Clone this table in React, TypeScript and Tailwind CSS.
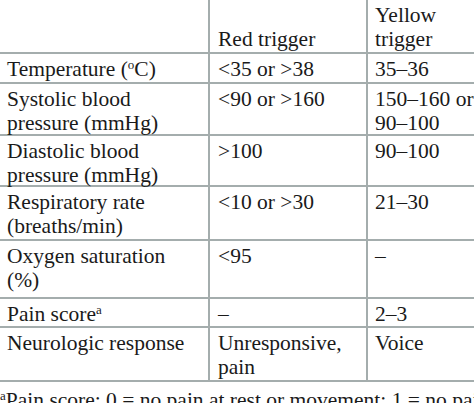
import React from "react";

type Row = { h: string; a: React.ReactNode; b: React.ReactNode; c: React.ReactNode };

const Sup = ({ children }: { children: React.ReactNode }) => (
  <span className="text-[13px] leading-none relative -top-[7px]">{children}</span>
);

const rows: Row[] = [
  { h: "h-[30px]", a: <>Temperature (<Sup>o</Sup>C)</>, b: "<35 or >38", c: "35–36" },
  { h: "h-[52px]", a: <>Systolic blood<br />pressure (mmHg)</>, b: "<90 or >160", c: <>150–160 or<br />90–100</> },
  { h: "h-[51px]", a: <>Diastolic blood<br />pressure (mmHg)</>, b: ">100", c: "90–100" },
  { h: "h-[54px]", a: <>Respiratory rate<br />(breaths/min)</>, b: "<10 or >30", c: "21–30" },
  { h: "h-[58px]", a: <>Oxygen saturation<br />(%)</>, b: "<95", c: "–" },
  { h: "h-[29px]", a: <>Pain score<Sup>a</Sup></>, b: "–", c: "2–3" },
  { h: "h-[54px]", a: "Neurologic response", b: <>Unresponsive,<br />pain</>, c: "Voice" },
];

export default function App() {
  return (
    <div
      className="w-[474px] h-[403px] overflow-hidden bg-white text-[#1a1a1a] text-[21.5px] leading-[24px]"
      style={{ fontFamily: '"Liberation Serif", "Times New Roman", serif' }}
    >
      <div className="w-[560px]">
        <div className="grid grid-cols-[208px_158px_1fr] h-[54px] border-b-2 border-[#a4adad]">
          <div />
          <div className="border-l-2 border-[#a4adad] pl-2 flex items-end pb-px">Red trigger</div>
          <div className="border-l-2 border-[#a4adad] pl-[7px] flex items-end pb-px">
            Yellow<br />trigger
          </div>
        </div>
        {rows.map((r, i) => (
          <div key={i} className={`grid grid-cols-[208px_158px_1fr] border-b-2 border-[#a4adad] ${r.h}`}>
            <div className="pl-[7px] pt-[3px] whitespace-nowrap">{r.a}</div>
            <div className="border-l-2 border-[#a4adad] pl-2 pt-[3px] whitespace-nowrap">{r.b}</div>
            <div className="border-l-2 border-[#a4adad] pl-[7px] pt-[3px] whitespace-nowrap">{r.c}</div>
          </div>
        ))}
        <div className="pt-[6px] whitespace-nowrap">
          <Sup>a</Sup>Pain score: 0 = no pain at rest or movement; 1 = no pain at rest
        </div>
      </div>
    </div>
  );
}
